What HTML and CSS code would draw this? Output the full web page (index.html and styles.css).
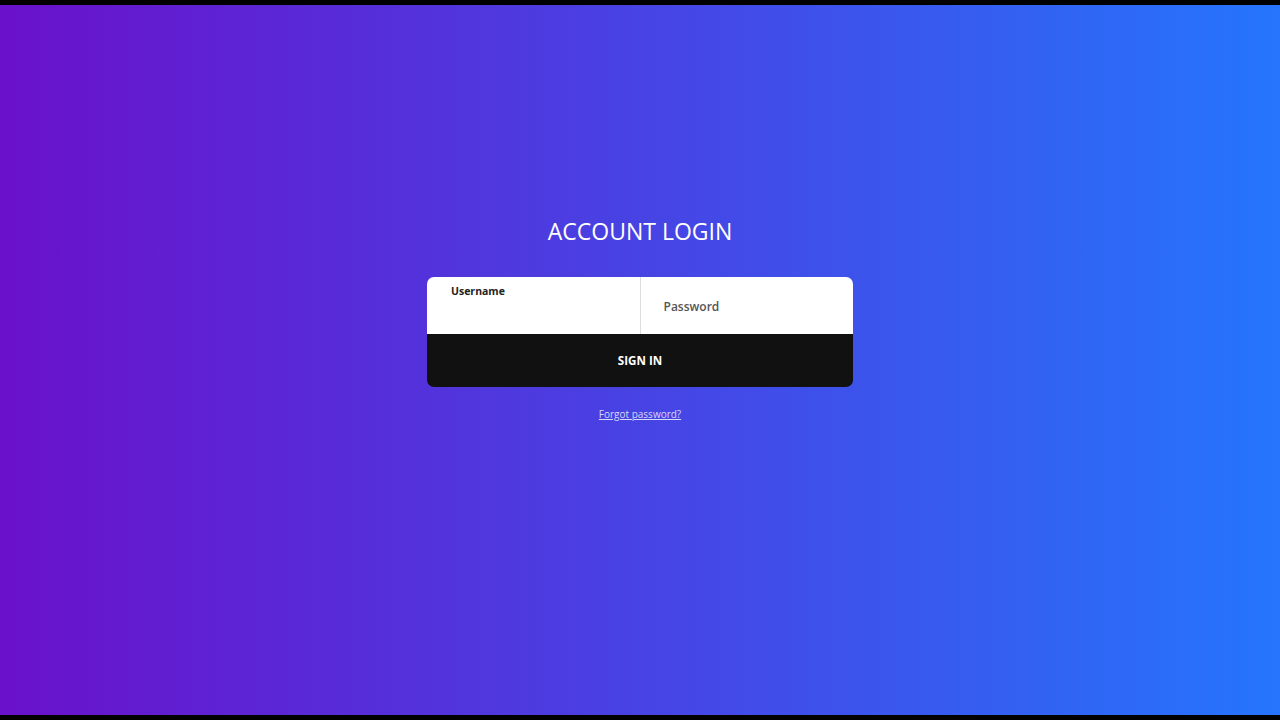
FILE: index.html
```html
<!DOCTYPE html>
<html lang="en">
<head>
<meta charset="utf-8">
<title>Account Login</title>
<link rel="stylesheet" href="styles.css">
</head>
<body>
<main class="page">
  <h1 class="title">ACCOUNT LOGIN</h1>
  <form class="card">
    <div class="fields">
      <label class="field field-user">
        <span class="field-label">Username</span>
        <input class="field-input" type="text">
      </label>
      <label class="field field-pass">
        <input class="field-input" type="password" placeholder="Password">
      </label>
    </div>
    <button class="signin" type="button">SIGN IN</button>
  </form>
  <a class="forgot" href="#">Forgot password?</a>
</main>
</body>
</html>
```

FILE: styles.css
```css
* { box-sizing: border-box; }
html, body { margin: 0; padding: 0; background: #000; }
body { font-family: "Open Sans", "Liberation Sans", sans-serif; }
.page {
  margin: 5px 0;
  height: 710px;
  background: linear-gradient(to right, #6a11cb, #2575fc);
  display: flex;
  flex-direction: column;
  align-items: center;
  padding-top: 210px;
}
.title {
  margin: 0;
  font-size: 23px;
  font-weight: 400;
  line-height: 32px;
  color: #fff;
  letter-spacing: 0;
}
.card {
  margin-top: 30px;
  width: 426px;
  border-radius: 7px;
  overflow: hidden;
  display: flex;
  flex-direction: column;
}
.fields {
  display: flex;
  height: 57px;
  background: #fff;
}
.field {
  flex: 1;
  position: relative;
  display: flex;
  flex-direction: column;
  padding: 7px 23px 0;
}
.field-pass { border-left: 1px solid #dcdcdc; padding-top: 2px; justify-content: center; }
.field-label {
  font-size: 10.5px;
  font-weight: 700;
  color: #222;
  line-height: 14px;
  padding-left: 1px;
}
.field-input {
  border: 0;
  outline: none;
  background: transparent;
  font-family: inherit;
  font-size: 12px;
  font-weight: 600;
  color: #333;
  padding: 0;
  width: 100%;
}
.field-input::placeholder { color: #555; opacity: 1; }
.signin {
  height: 53px;
  border: 0;
  background: #111;
  color: #fff;
  font-family: inherit;
  font-size: 11.6px;
  font-weight: 700;
  cursor: pointer;
}
.forgot {
  margin-top: 20px;
  font-size: 10px;
  color: #d6d6f5;
  text-decoration: underline;
}
```
